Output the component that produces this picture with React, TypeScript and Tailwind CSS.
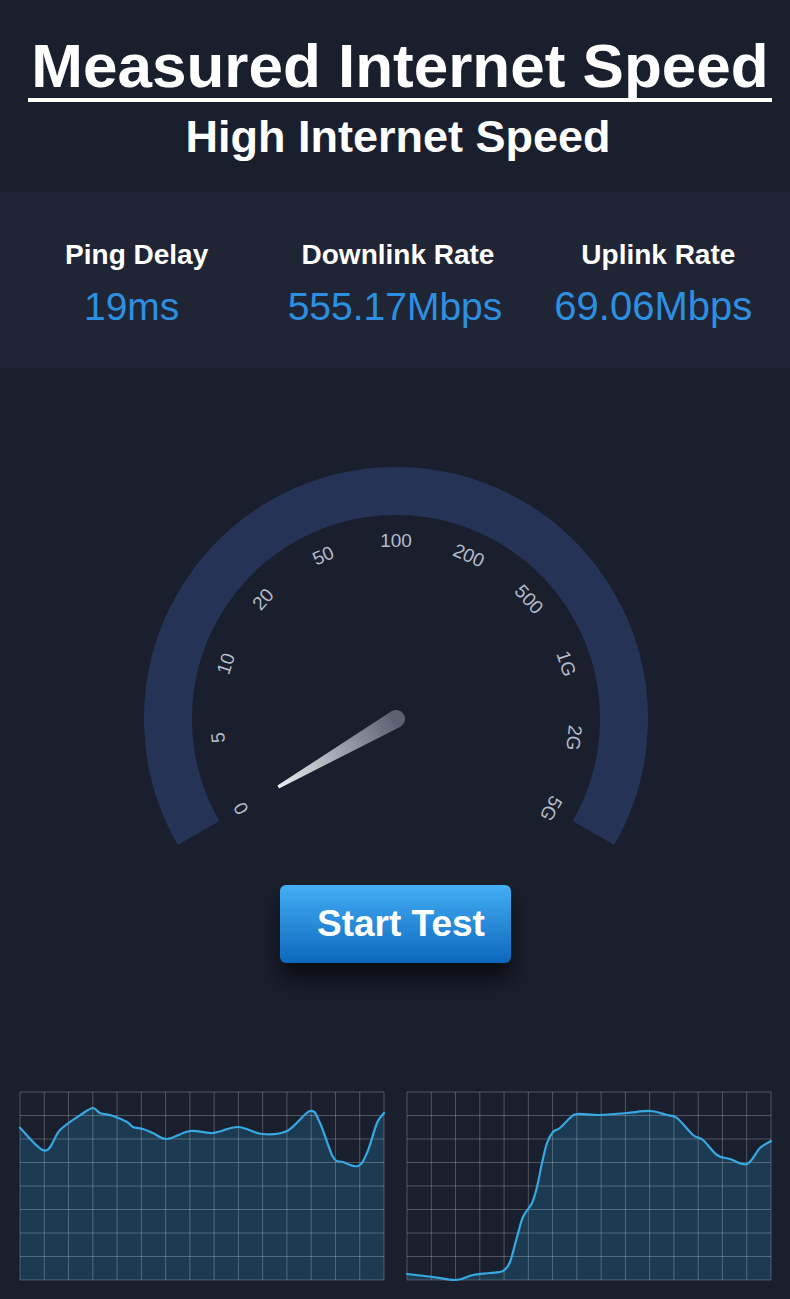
import React from "react";

type Pt = [number, number];

const leftPts: Pt[] = [
  [0, 35.7], [25, 58.7], [40, 38], [62, 22], [73, 16], [80, 21], [93, 24], [107, 30],
  [113, 35], [123, 37], [133, 41], [147, 47], [170, 39], [193, 41], [218, 35],
  [242, 42], [267, 39], [290, 19], [300, 31], [313, 65], [323, 70], [338, 74],
  [347, 61], [357, 31], [364, 21],
];

const rightPts: Pt[] = [
  [0, 182], [26, 185], [49, 188], [66, 183], [83, 181], [96, 179], [103, 170],
  [110, 145], [116, 125], [125, 111], [130, 95], [135, 71], [140, 51], [146, 40],
  [153, 36], [163, 26], [170, 22], [193, 23], [220, 21], [243, 19], [260, 23],
  [270, 26], [286, 43], [296, 48], [310, 63], [323, 67], [340, 72], [353, 56],
  [364, 49],
];

// catmull-rom -> cubic bezier
function smooth(pts: Pt[]) {
  let d = `M ${pts[0][0]} ${pts[0][1]}`;
  for (let i = 0; i < pts.length - 1; i++) {
    const p0 = pts[i - 1] || pts[i];
    const p1 = pts[i];
    const p2 = pts[i + 1];
    const p3 = pts[i + 2] || p2;
    const c1x = p1[0] + (p2[0] - p0[0]) / 6;
    const c1y = p1[1] + (p2[1] - p0[1]) / 6;
    const c2x = p2[0] - (p3[0] - p1[0]) / 6;
    const c2y = p2[1] - (p3[1] - p1[1]) / 6;
    d += ` C ${c1x.toFixed(1)} ${c1y.toFixed(1)} ${c2x.toFixed(1)} ${c2y.toFixed(1)} ${p2[0]} ${p2[1]}`;
  }
  return d;
}

function Chart({ pts }: { pts: Pt[] }) {
  const w = 364;
  const h = 188;
  const line = smooth(pts);
  const cols = Array.from({ length: 16 }, (_, i) => (i * w) / 15);
  const rows = Array.from({ length: 9 }, (_, i) => (i * h) / 8);
  return (
    <svg width={w} height={h} viewBox={`0 0 ${w} ${h}`} className="block overflow-visible">
      <path d={`${line} L ${w} ${h} L 0 ${h} Z`} fill="#1c3a52" />
      {cols.map((x, i) => (
        <line key={"c" + i} x1={x} y1={0} x2={x} y2={h} stroke="rgba(255,255,255,0.24)" strokeWidth={1} />
      ))}
      {rows.map((y, i) => (
        <line key={"r" + i} x1={0} y1={y} x2={w} y2={y} stroke="rgba(255,255,255,0.24)" strokeWidth={1} />
      ))}
      <path d={line} fill="none" stroke="#36a9e4" strokeWidth={2.2} strokeLinecap="round" />
    </svg>
  );
}

const ticks = ["0", "5", "10", "20", "50", "100", "200", "500", "1G", "2G", "5G"];

function Gauge() {
  const cx = 396;
  const cy = 264;
  const r = 228;
  const rad = (deg: number) => (deg * Math.PI) / 180;
  const sx = cx + r * Math.sin(rad(-120));
  const sy = cy - r * Math.cos(rad(-120));
  const ex = cx + r * Math.sin(rad(120));
  const ey = cy - r * Math.cos(rad(120));
  return (
    <svg width={790} height={400} viewBox="0 0 790 400" className="block">
      <defs>
        <linearGradient id="needle" gradientUnits="userSpaceOnUse" x1="0" y1="0" x2="0" y2="-136">
          <stop offset="0" stopColor="#5b6171" />
          <stop offset="1" stopColor="#e9ecf1" />
        </linearGradient>
      </defs>
      <path
        d={`M ${sx} ${sy} A ${r} ${r} 0 1 1 ${ex} ${ey}`}
        fill="none"
        stroke="#253357"
        strokeWidth={48}
      />
      {ticks.map((t, i) => {
        const a = -120 + 24 * i;
        const x = cx + 179 * Math.sin(rad(a));
        const y = cy - 179 * Math.cos(rad(a));
        return (
          <text
            key={t}
            x={x}
            y={y}
            textAnchor="middle"
            dominantBaseline="central"
            transform={`rotate(${a} ${x} ${y})`}
            fill="#b4bccb"
            fontSize={19}
            fontFamily="'Liberation Sans', Arial, sans-serif"
          >
            {t}
          </text>
        );
      })}
      <g transform={`translate(${cx} ${cy}) rotate(-120)`}>
        <path d="M -9 0 L -1.6 -136 L 1.6 -136 L 9 0 A 9 9 0 0 1 -9 0 Z" fill="url(#needle)" />
      </g>
    </svg>
  );
}

export default function App() {
  return (
    <main className="w-[790px] min-h-[1299px] bg-[#1a1f2d] text-white font-['Liberation_Sans',Arial,sans-serif]">
      {/* Header */}
      <header className="bg-[#1a1f2e] pt-[33px] pb-[33px] text-center">
        <div className="ml-[28px] w-[744px] border-b-4 border-white text-[62px] leading-[65px] font-bold">
          Measured Internet Speed
        </div>
        <div className="mt-[12px] pl-[6px] text-[45px] leading-[45px] font-bold">High Internet Speed</div>
      </header>

      {/* Stats */}
      <section className="bg-[#1f2535] pt-[49px] pb-[42px] grid grid-cols-3 text-center">
        <div>
          <div className="pl-[10px] text-[28px] leading-[28px] font-bold">Ping Delay</div>
          <div className="mt-[18px] text-[39px] leading-[39px] text-[#2d8fe0]">19ms</div>
        </div>
        <div>
          <div className="pl-[6px] text-[28px] leading-[28px] font-bold">Downlink Rate</div>
          <div className="mt-[18px] text-[39px] leading-[39px] text-[#2d8fe0]">555.17Mbps</div>
        </div>
        <div>
          <div className="text-[28px] leading-[28px] font-bold">Uplink Rate</div>
          <div className="mt-[18px] pr-[10px] text-[40px] leading-[39px] text-[#2d8fe0]">69.06Mbps</div>
        </div>
      </section>

      {/* Gauge */}
      <section className="pt-[87px] flex flex-col items-center">
        <Gauge />
        <button className="mt-[30px] w-[231px] h-[78px] pl-[12px] rounded-md bg-gradient-to-b from-[#43aff5] to-[#0b67bc] text-[37px] font-bold text-white shadow-[0_16px_22px_rgba(0,0,0,0.6)]">
          Start Test
        </button>
      </section>

      {/* Charts */}
      <section className="mt-[129px] pl-[20px] pb-[19px] flex gap-[23px]">
        <Chart pts={leftPts} />
        <Chart pts={rightPts} />
      </section>
    </main>
  );
}
